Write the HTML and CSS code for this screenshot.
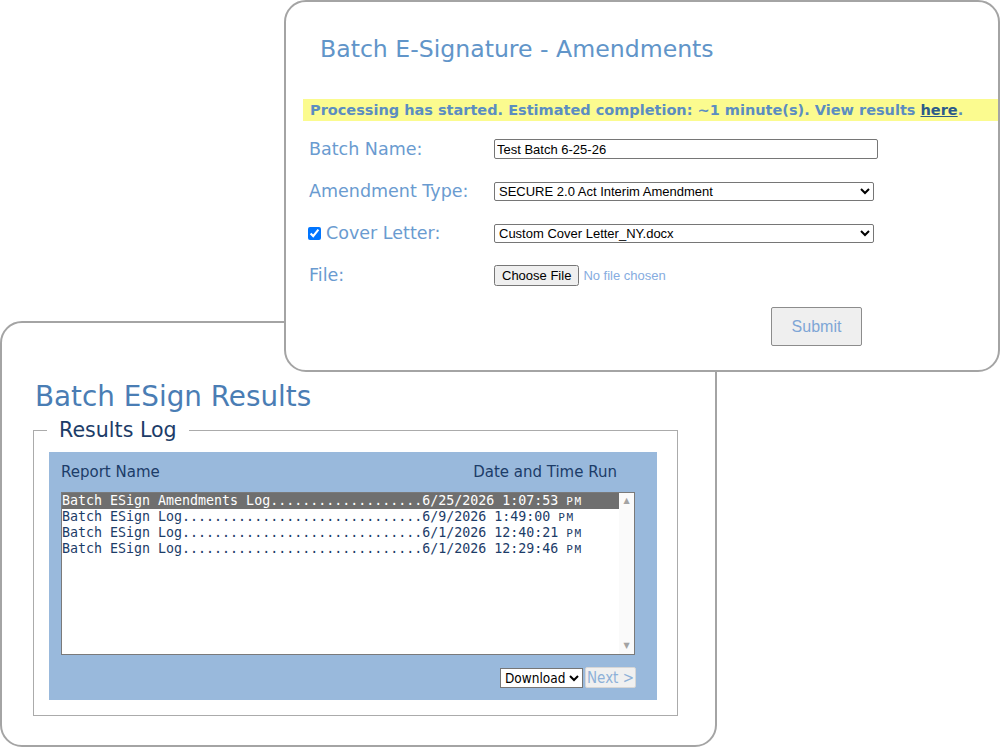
FILE: index.html
```html
<!DOCTYPE html>
<html lang="en">
<head>
    <meta charset="UTF-8">
    <meta name="viewport" content="width=device-width, initial-scale=1.0">
    <title>Batch E-Signature</title>
    <link rel="stylesheet" href="styles.css">
</head>
<body>
    <div class="desk">
        <!-- results window sits behind the form window -->
        <div class="window results">
            <h2 class="results-title">Batch ESign Results</h2>
            <fieldset class="log">
                <legend>Results Log</legend>
                <div class="log-panel">
                    <div class="log-head">
                        <span>Report Name</span>
                        <span>Date and Time Run</span>
                    </div>
                    <div class="listbox">
                        <div class="rows">
                            <div class="row selected">Batch ESign Amendments Log...................6/25/2026 1:07:53 <span class="ampm">PM</span></div>
                            <div class="row">Batch ESign Log..............................6/9/2026 1:49:00 <span class="ampm">PM</span></div>
                            <div class="row">Batch ESign Log..............................6/1/2026 12:40:21 <span class="ampm">PM</span></div>
                            <div class="row">Batch ESign Log..............................6/1/2026 12:29:46 <span class="ampm">PM</span></div>
                        </div>
                        <div class="scrollbar">
                            <span class="arrow">&#9650;</span>
                            <span class="arrow">&#9660;</span>
                        </div>
                    </div>
                    <div class="log-actions">
                        <select class="action-select">
                            <option>Download</option>
                        </select>
                        <button class="next-btn" type="button">Next &gt;</button>
                    </div>
                </div>
            </fieldset>
        </div>

        <div class="window amend">
            <h1 class="amend-title">Batch E-Signature - Amendments</h1>
            <div class="notice">Processing has started. Estimated completion: ~1 minute(s). View results <a href="#">here</a>.</div>
            <form class="amend-form">
                <label class="field-label" for="batch-name">Batch Name:</label>
                <div class="field"><input id="batch-name" class="text-input" type="text" value="Test Batch 6-25-26"></div>

                <label class="field-label" for="amend-type">Amendment Type:</label>
                <div class="field">
                    <select id="amend-type" class="select-input">
                        <option>SECURE 2.0 Act Interim Amendment</option>
                    </select>
                </div>

                <label class="field-label check-label"><input type="checkbox" checked> Cover Letter:</label>
                <div class="field">
                    <select class="select-input">
                        <option>Custom Cover Letter_NY.docx</option>
                    </select>
                </div>

                <label class="field-label" for="file">File:</label>
                <div class="field"><input id="file" class="file-input" type="file"></div>
            </form>
            <div class="submit-row">
                <button class="submit-btn" type="button">Submit</button>
            </div>
        </div>
    </div>
</body>
</html>
```

FILE: styles.css
```css
* {
    margin: 0;
    padding: 0;
    box-sizing: border-box;
}

body {
    font-family: "DejaVu Sans", Verdana, sans-serif;
    background: #fff;
    width: 1000px;
    height: 747px;
    overflow: hidden;
}

.desk {
    position: relative;
    width: 1000px;
    height: 747px;
}

.window {
    position: absolute;
    background: #fff;
    border: 2px solid #a4a4a4;
    border-radius: 22px;
}

/* ---------- form window ---------- */

.amend {
    left: 284px;
    top: 0;
    width: 716px;
    height: 372px;
    z-index: 2;
}

.amend-title {
    font-size: 23.6px;
    font-weight: normal;
    color: #6195c9;
    padding: 33px 0 0 34px;
    line-height: 28px;
}

.notice {
    margin: 36px 0 0 17px;
    padding: 0 7px;
    height: 22px;
    line-height: 22px;
    background: #fbfb8f;
    color: #5b8dc1;
    font-size: 14.5px;
    font-weight: bold;
    white-space: nowrap;
}

.notice a {
    color: #2c5a8a;
}

.amend-form {
    display: grid;
    grid-template-columns: 185px 384px;
    grid-auto-rows: 42px;
    align-items: center;
    margin: 7px 0 0 23px;
}

.field-label {
    font-size: 17.5px;
    color: #6a9bd0;
    display: flex;
    align-items: center;
    gap: 5px;
}

.check-label input {
    width: 13px;
    height: 13px;
    margin: 0 0 0 -1px;
    accent-color: #0075ff;
}

.field {
    display: flex;
    align-items: center;
}

.text-input {
    width: 384px;
    height: 20px;
    border: 1px solid #767676;
    border-radius: 2px;
    padding: 0 2px;
    font-family: "Liberation Sans", Arial, sans-serif;
    font-size: 13px;
    color: #000;
}

.select-input {
    width: 380px;
    height: 19px;
    font-family: "Liberation Sans", Arial, sans-serif;
    font-size: 13px;
    color: #000;
    border: 1px solid #767676;
    border-radius: 2px;
    background: #fff;
}

.file-input {
    font-family: "Liberation Sans", Arial, sans-serif;
    font-size: 13px;
    color: #86ace0;
}

.submit-row {
    display: flex;
    justify-content: flex-end;
    padding-right: 136px;
    margin-top: 11px;
}

.submit-btn {
    width: 91px;
    height: 39px;
    background: #efefef;
    border: 1px solid #8c8c8c;
    border-radius: 2px;
    font-family: "Liberation Sans", Arial, sans-serif;
    font-size: 16px;
    color: #7ea6d6;
}

/* ---------- results window ---------- */

.results {
    left: 0;
    top: 321px;
    width: 717px;
    height: 426px;
    z-index: 1;
}

.results-title {
    font-size: 27.8px;
    font-weight: normal;
    color: #4a7db4;
    line-height: 34px;
    padding: 57px 0 0 33px;
}

.log {
    margin: 4px 0 0 31px;
    width: 645px;
    border: 1px solid #ababab;
    padding: 10px 20px 15px 15px;
}

.log legend {
    font-size: 20.6px;
    color: #1c3c68;
    padding: 0 12px;
    margin-left: -2px;
}

.log-panel {
    background: #99b9dc;
    padding: 10px 22px 12px 12px;
    color: #1c3c68;
}

.log-head {
    display: flex;
    justify-content: space-between;
    font-size: 15px;
    line-height: 20px;
    padding-right: 18px;
}

.listbox {
    display: flex;
    margin-top: 10px;
    height: 163px;
    border: 1px solid #7a7a7a;
    background: #fff;
}

.rows {
    flex: 1;
    font-family: "DejaVu Sans Mono", "Liberation Mono", monospace;
    font-size: 13.3px;
    line-height: 16px;
    color: #1c3c68;
}

.row {
    height: 16px;
    white-space: pre;
}

.row.selected {
    background: #6f6f6f;
    color: #fff;
}

.ampm {
    font-size: 11px;
    letter-spacing: 1.5px;
}

.scrollbar {
    width: 15px;
    display: flex;
    flex-direction: column;
    justify-content: space-between;
    align-items: center;
    padding: 3px 0;
    background: #fafafa;
}

.arrow {
    font-size: 8px;
    line-height: 10px;
    color: #a3a3a3;
}

.log-actions {
    display: flex;
    justify-content: flex-end;
    align-items: center;
    gap: 2px;
    margin-top: 12px;
    margin-right: -1px;
}

.action-select {
    height: 20px;
    font-family: "DejaVu Sans Condensed", "Liberation Sans", Arial, sans-serif;
    font-stretch: condensed;
    font-size: 13.5px;
    color: #000;
    border: 1px solid #767676;
    background: #fff;
}

.next-btn {
    height: 21px;
    width: 51px;
    background: #f0f0f0;
    border: 1px solid #d6d6d6;
    border-radius: 2px;
    font-family: "DejaVu Sans Condensed", "Liberation Sans", Arial, sans-serif;
    font-stretch: condensed;
    font-size: 15px;
    color: #8db0d8;
}
```
